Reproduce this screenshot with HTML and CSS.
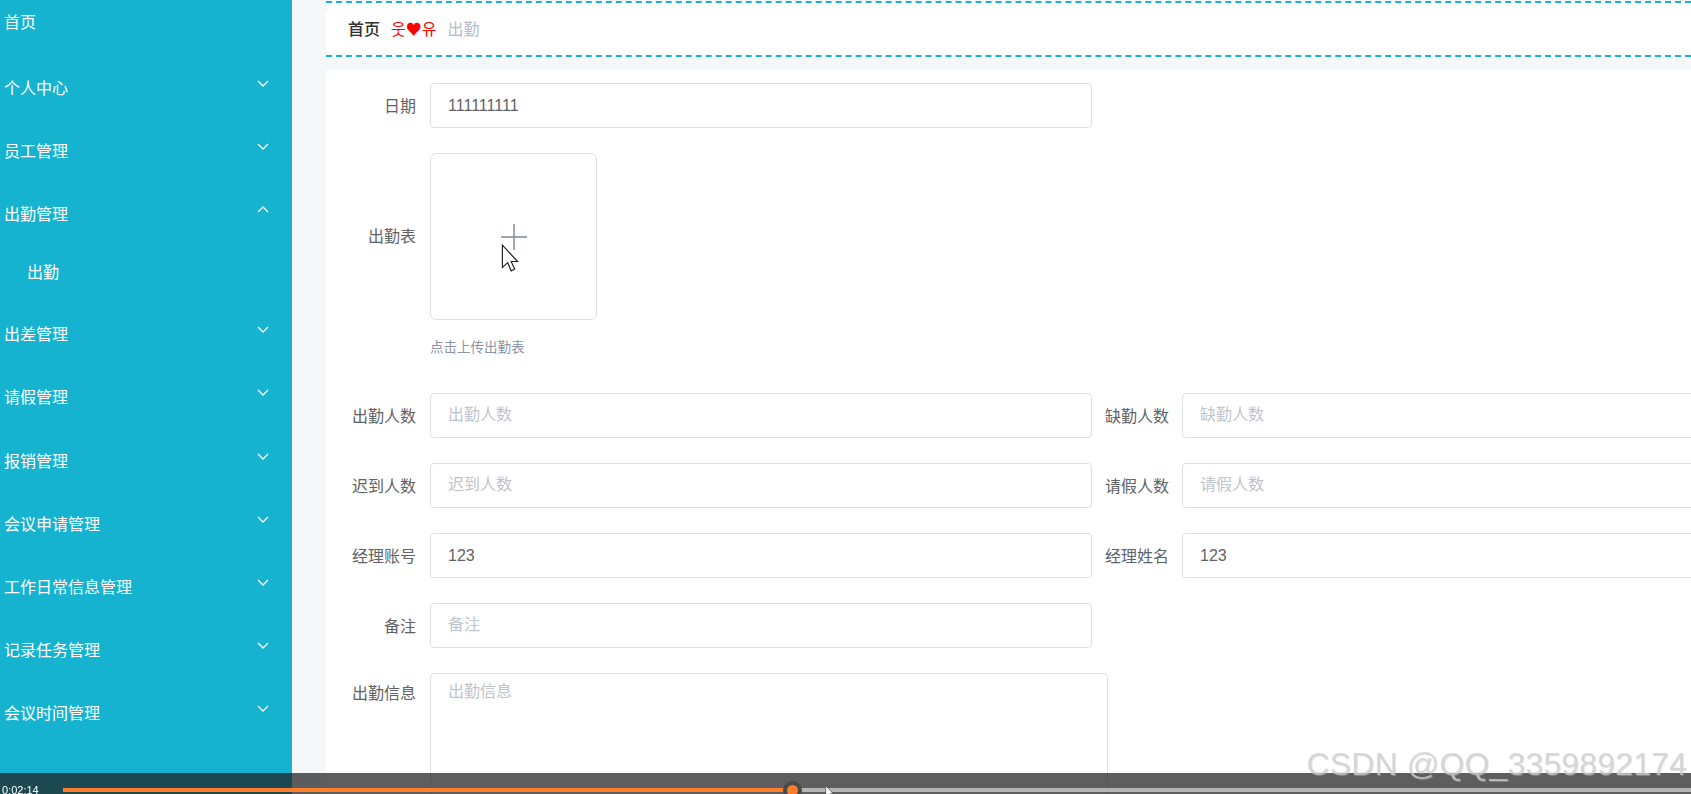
FILE: index.html
```html
<!DOCTYPE html>
<html lang="zh-CN">
<head>
    <meta charset="UTF-8">
    <meta name="viewport" content="width=device-width, initial-scale=1.0">
    <title>出勤</title>
    <link rel="stylesheet" href="styles.css">
</head>
<body>
    <div class="app">
        <div class="sidebar">
            <div class="menu-item first">首页</div>
            <div class="menu-item"><span>个人中心</span><svg class="chevron" viewBox="0 0 12 7"><polyline points="1,1 6,6 11,1"/></svg></div>
            <div class="menu-item"><span>员工管理</span><svg class="chevron" viewBox="0 0 12 7"><polyline points="1,1 6,6 11,1"/></svg></div>
            <div class="menu-item"><span>出勤管理</span><svg class="chevron" viewBox="0 0 12 7"><polyline points="1,6 6,1 11,6"/></svg></div>
            <div class="menu-sub">出勤</div>
            <div class="menu-item"><span>出差管理</span><svg class="chevron" viewBox="0 0 12 7"><polyline points="1,1 6,6 11,1"/></svg></div>
            <div class="menu-item"><span>请假管理</span><svg class="chevron" viewBox="0 0 12 7"><polyline points="1,1 6,6 11,1"/></svg></div>
            <div class="menu-item"><span>报销管理</span><svg class="chevron" viewBox="0 0 12 7"><polyline points="1,1 6,6 11,1"/></svg></div>
            <div class="menu-item"><span>会议申请管理</span><svg class="chevron" viewBox="0 0 12 7"><polyline points="1,1 6,6 11,1"/></svg></div>
            <div class="menu-item"><span>工作日常信息管理</span><svg class="chevron" viewBox="0 0 12 7"><polyline points="1,1 6,6 11,1"/></svg></div>
            <div class="menu-item"><span>记录任务管理</span><svg class="chevron" viewBox="0 0 12 7"><polyline points="1,1 6,6 11,1"/></svg></div>
            <div class="menu-item"><span>会议时间管理</span><svg class="chevron" viewBox="0 0 12 7"><polyline points="1,1 6,6 11,1"/></svg></div>
        </div>

        <div class="main">
            <div class="breadcrumb">
                <span class="crumb-home">首页</span>
                <span class="crumb-sep">웃♥유</span>
                <span class="crumb-now">出勤</span>
            </div>

            <div class="card">
                <div class="form-row">
                    <div class="form-item">
                        <label class="label">日期</label>
                        <input class="input filled" type="text" value="111111111">
                    </div>
                </div>

                <div class="form-row upload-row">
                    <div class="form-item">
                        <label class="label upload-label">出勤表</label>
                        <div>
                            <div class="upload-box">
                                <svg class="plus" viewBox="0 0 26 26"><path d="M13 0V26M0 13H26"/></svg>
                                <svg class="pointer" viewBox="0 0 15 24"><path d="M1 1V20L5.5 16L8.5 23L11.5 21.5L8.5 15H14Z"/></svg>
                            </div>
                            <div class="upload-tip">点击上传出勤表</div>
                        </div>
                    </div>
                </div>

                <div class="form-row">
                    <div class="form-item">
                        <label class="label">出勤人数</label>
                        <input class="input" type="text" placeholder="出勤人数">
                    </div>
                    <div class="form-item second">
                        <label class="label">缺勤人数</label>
                        <input class="input" type="text" placeholder="缺勤人数">
                    </div>
                </div>

                <div class="form-row">
                    <div class="form-item">
                        <label class="label">迟到人数</label>
                        <input class="input" type="text" placeholder="迟到人数">
                    </div>
                    <div class="form-item second">
                        <label class="label">请假人数</label>
                        <input class="input" type="text" placeholder="请假人数">
                    </div>
                </div>

                <div class="form-row">
                    <div class="form-item">
                        <label class="label">经理账号</label>
                        <input class="input filled" type="text" value="123">
                    </div>
                    <div class="form-item second">
                        <label class="label">经理姓名</label>
                        <input class="input filled" type="text" value="123">
                    </div>
                </div>

                <div class="form-row">
                    <div class="form-item">
                        <label class="label">备注</label>
                        <input class="input" type="text" placeholder="备注">
                    </div>
                </div>

                <div class="form-row">
                    <div class="form-item">
                        <label class="label area-label">出勤信息</label>
                        <textarea class="area" placeholder="出勤信息"></textarea>
                    </div>
                </div>
            </div>
        </div>
    </div>

    <!-- video player bar over the page -->
    <div class="player">
        <span class="time">0:02:14</span>
        <div class="track">
            <div class="played" style="width: 44.8%"></div>
            <div class="knob" style="left: 44.8%"></div>
        </div>
        <svg class="player-cursor" viewBox="0 0 15 24"><path d="M1 1V20L5.5 16L8.5 23L11.5 21.5L8.5 15H14Z"/></svg>
    </div>
    <div class="watermark">CSDN @QQ_3359892174</div>
</body>
</html>
```

FILE: styles.css
```css
html, body {
    height: 100%;
}
body {
    margin: 0;
    overflow: hidden;
    background: #f5f7f9;
    font-family: "Liberation Sans", "Noto Sans CJK SC", sans-serif;
    font-size: 16px;
    color: #606266;
}
.app {
    display: flex;
    height: 794px;
    overflow: hidden;
}

/* Sidebar */
.sidebar {
    flex: 0 0 292px;
    box-sizing: border-box;
    padding: 0 23px 0 4px;
    background: #15b3d0;
    color: white;
}
.menu-item {
    display: flex;
    align-items: center;
    justify-content: space-between;
    height: 63.2px;
}
.menu-item.first {
    height: 42px;
    margin-bottom: 13px;
}
.menu-sub {
    height: 53px;
    padding: 1px 0 3px 23px;
    line-height: 53px;
}
.chevron {
    width: 12px;
    height: 7px;
    margin-bottom: 7px;
    fill: none;
    stroke: white;
    stroke-width: 1.3;
}

/* Main area */
.main {
    flex: 1;
    min-width: 0;
    padding-left: 34px;
}
.breadcrumb {
    display: flex;
    align-items: center;
    gap: 11px;
    box-sizing: border-box;
    height: 56px;
    margin-top: 1px;
    padding: 0 0 2px 22px;
    background: white;
    border-top: 2px dashed #15b3d0;
    border-bottom: 2px dashed #15b3d0;
}
.crumb-home {
    color: #303133;
    font-weight: 500;
}
.crumb-sep {
    color: #f00;
    font-family: "Noto Sans CJK KR", sans-serif;
}
.crumb-now {
    color: #b4bccc;
}
.card {
    margin-top: 13px;
    padding-top: 13px;
    height: 800px;
    background: white;
}

/* Form */
.form-row {
    display: flex;
    margin-bottom: 25px;
}
.form-item {
    display: flex;
    align-items: flex-start;
    flex: 0 0 767px;
}
.form-item.second {
    flex: 0 0 auto;
    margin-left: -2px;
}
.label {
    flex: 0 0 90px;
    height: 45px;
    margin-right: 14px;
    line-height: 47px;
    text-align: right;
}
.second .label {
    flex-basis: 64px;
    margin-left: 14px;
    margin-right: 13px;
}
.input {
    box-sizing: border-box;
    width: 662px;
    height: 45px;
    padding: 0 17px 1px;
    border: 1px solid #dcdfe6;
    border-radius: 4px;
    background: white;
    color: #606266;
    font-family: inherit;
    font-size: 16px;
    outline: none;
}
.input.filled {
    padding: 1px 17px 0;
}
.input::placeholder,
.area::placeholder {
    color: #c0c4cc;
}
.area {
    box-sizing: border-box;
    width: 678px;
    height: 150px;
    padding: 4px 17px;
    border: 1px solid #dcdfe6;
    border-radius: 4px;
    font-family: inherit;
    font-size: 16px;
    resize: none;
    outline: none;
}
.area-label {
    line-height: 41px;
}

/* Upload */
.upload-label {
    height: 166px;
    line-height: 168px;
}
.upload-box {
    position: relative;
    display: flex;
    align-items: center;
    justify-content: center;
    box-sizing: border-box;
    width: 167px;
    height: 167px;
    border: 1px solid #dcdfe6;
    border-radius: 6px;
}
.plus {
    width: 26px;
    height: 26px;
    fill: none;
    stroke: #7f8896;
    stroke-width: 1.4;
}
.pointer {
    position: absolute;
    left: 70px;
    top: 90px;
    width: 18px;
    height: 28px;
    fill: white;
    stroke: #222;
    stroke-width: 1;
}
.upload-tip {
    height: 48px;
    padding-top: 18px;
    box-sizing: border-box;
    color: #8a93a6;
    font-size: 13.5px;
    line-height: 20px;
}

/* Player bar */
.player {
    position: fixed;
    left: 0;
    right: 0;
    bottom: 0;
    display: flex;
    align-items: center;
    height: 21px;
    padding-top: 13px;
    box-sizing: border-box;
    background: rgba(32, 32, 32, 0.72);
}
.time {
    flex: 0 0 61px;
    padding-left: 2px;
    color: white;
    font-size: 11px;
    line-height: 8px;
}
.track {
    position: relative;
    flex: 1;
    height: 4px;
    background: #b5b5b5;
}
.played {
    height: 100%;
    background: #ff7f2a;
}
.knob {
    position: absolute;
    top: -7px;
    width: 11px;
    height: 11px;
    margin-left: -9px;
    border: 4px solid #4a4a4a;
    border-radius: 50%;
    background: #ff7f2a;
}
.player-cursor {
    position: absolute;
    left: 825px;
    top: 12px;
    width: 9px;
    height: 14px;
    fill: white;
    stroke: #222;
}
.watermark {
    position: fixed;
    right: 4px;
    bottom: 12px;
    color: rgba(205, 205, 205, 0.75);
    font-size: 32px;
    line-height: 36px;
    letter-spacing: 0.15px;
    text-shadow: 1px 1px 0 rgba(190, 190, 190, 0.4);
}
```
